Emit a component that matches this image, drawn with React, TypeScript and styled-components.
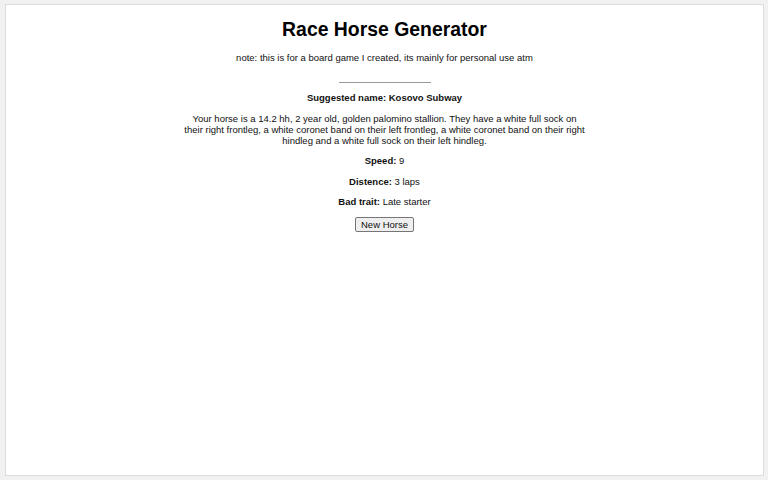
import React, { useState } from "react"
import styled, { createGlobalStyle } from "styled-components"

const GlobalStyle = createGlobalStyle`
  html, body {
    margin: 0;
    padding: 0;
    height: 100%;
    background: #f1f1f1;
  }
  #root {
    height: 100%;
  }
`

const Frame = styled.div`
  box-sizing: border-box;
  height: 100%;
  padding: 4px 4px 4px 5px;
`

const Card = styled.main`
  box-sizing: border-box;
  height: 100%;
  background: white;
  border: 1px solid #dcdcdc;
  font-family: "Liberation Sans", Arial, sans-serif;
  color: #111;
  text-align: center;
  padding-top: 13px;
  display: flex;
  flex-direction: column;
  align-items: center;
`

const Title = styled.h1`
  font-size: 19.4px;
  margin: 0;
  line-height: 22px;
  color: #000;
`

const Note = styled.p`
  font-size: 9.5px;
  line-height: 11px;
  margin: 12px 0 0;
`

const Rule = styled.hr`
  width: 92px;
  border: none;
  border-top: 1px solid #999;
  margin: 19px 0 0;
`

const Info = styled.div`
  width: 402px;
  font-size: 9.5px;
  line-height: 11px;
  margin-top: 9px;
  display: flex;
  flex-direction: column;
  gap: 9.5px;
  align-items: center;
`

const Line = styled.p`
  margin: 0;
`

const Button = styled.button`
  font-family: "Liberation Sans", Arial, sans-serif;
  font-size: 9.5px;
  line-height: 11px;
  padding: 1px 5px;
  background: #efefef;
  border: 1px solid #767676;
  border-radius: 2px;
  color: #111;
`

const names = ["Kosovo Subway", "Midnight Tariff", "Copper Lantern", "Velvet Thunder"]

export default function App() {
  const [index, setIndex] = useState(0)
  return (
    <>
      <GlobalStyle />
      <Frame>
        <Card>
          <Title>Race Horse Generator</Title>
          <Note>note: this is for a board game I created, its mainly for personal use atm</Note>
          <Rule />
          <Info>
            <Line>
              <b>Suggested name: {names[index]}</b>
            </Line>
            <Line>
              Your horse is a 14.2 hh, 2 year old, golden palomino stallion. They have a white full sock on
              their right frontleg, a white coronet band on their left frontleg, a white coronet band on their
              right hindleg and a white full sock on their left hindleg.
            </Line>
            <Line>
              <b>Speed:</b> 9
            </Line>
            <Line>
              <b>Distence:</b> 3 laps
            </Line>
            <Line>
              <b>Bad trait:</b> Late starter
            </Line>
            <Button onClick={() => setIndex((index + 1) % names.length)}>New Horse</Button>
          </Info>
        </Card>
      </Frame>
    </>
  )
}
